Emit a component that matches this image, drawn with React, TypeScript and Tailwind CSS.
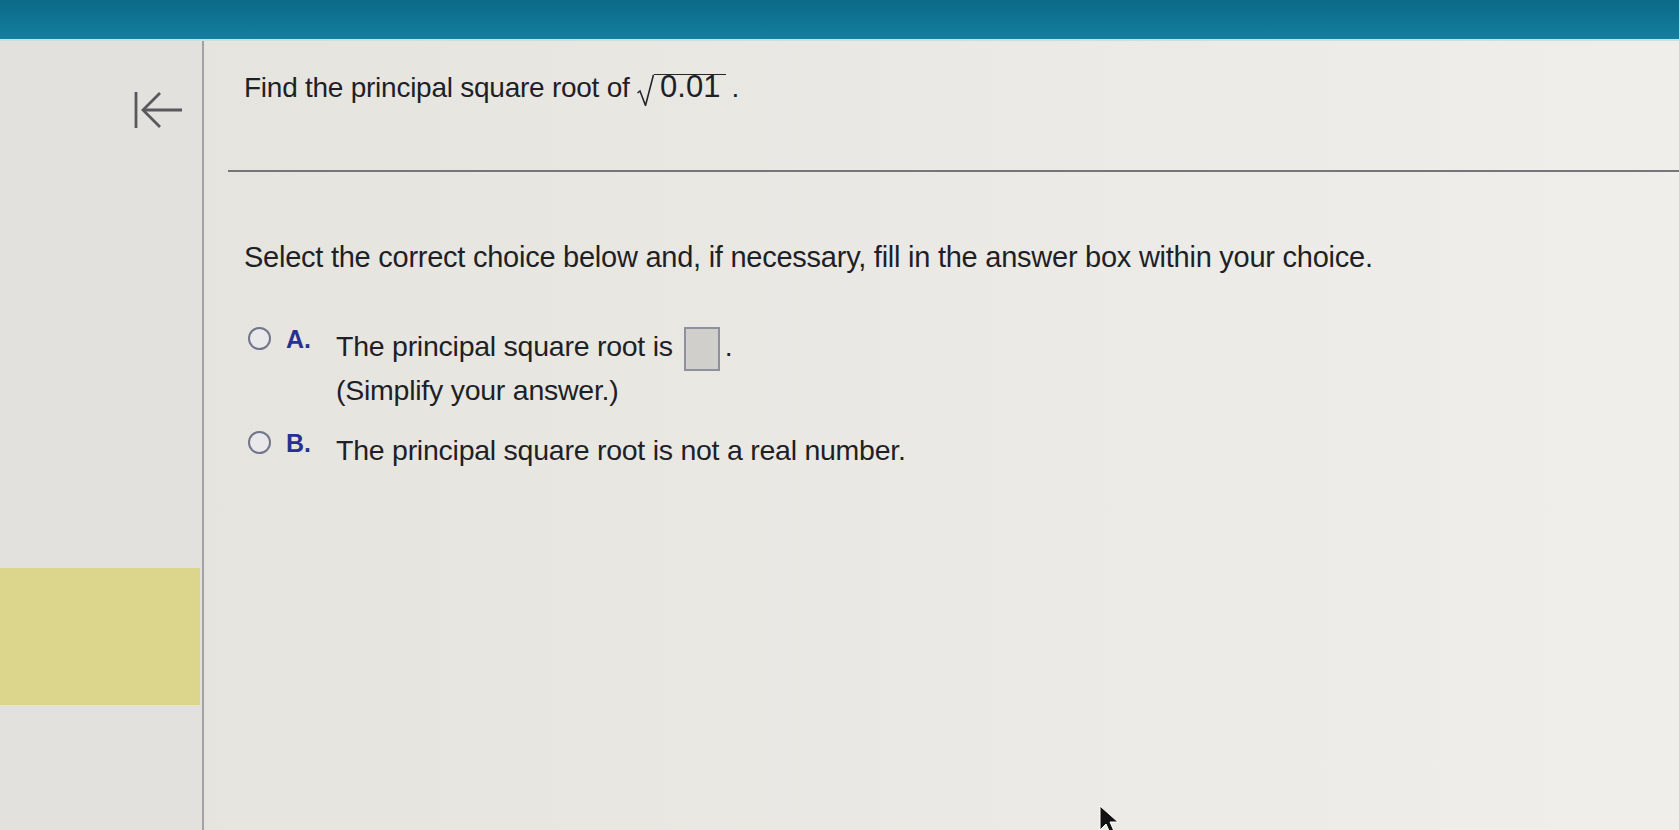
export default function App() {
  return (
    <div className="relative w-full h-[830px] overflow-hidden flex flex-col bg-[#e8e6e1] font-['Liberation_Sans',Arial,sans-serif] text-[#1f1f26]">
      <div className="h-[41px] shrink-0 bg-linear-to-b from-[#0b6a88] to-[#147f9f] border-b-2 border-[#cfdce0]" />

      <div className="flex flex-1">
        <aside className="w-[204px] shrink-0 bg-[#e2e1de] border-r-2 border-[#a2a2a6] flex flex-col">
          <button className="ml-[130px] mt-[49px] w-[56px] h-[40px]">
            <svg viewBox="0 0 56 40" className="w-[56px] h-[40px]" fill="none" stroke="#58585d" strokeWidth="2.8">
              <path d="M6 2v36" />
              <path d="M30 3 13 20 30 37" />
              <path d="M13 20h39" />
            </svg>
          </button>
          <div className="mt-[438px] h-[137px] mr-[2px] bg-[#dbd68c]" />
        </aside>

        <main className="flex-1 bg-linear-to-r from-[#e6e4df] to-[#efeeea]">
          <div className="ml-[24px] pl-[16px] pt-[31px] pb-[66px] border-b-2 border-[#76767a]">
            <div className="h-[32px] leading-[32px] text-[28px] tracking-[-0.25px] whitespace-nowrap">
              Find the principal square root of{' '}
              <svg viewBox="0 0 17 32" className="inline-block w-[17px] h-[32px] align-[-8.5px]" fill="none" stroke="#25252b" strokeWidth="1.6">
                <path d="M0.5 19 3 17 8.5 31.5 16.5 0.8" />
              </svg>
              <span className="inline-block border-t-[1.6px] border-[#25252b] text-[31px] leading-[24px] pl-[6px] pr-[6px] tracking-normal">0.01</span>
              <span className="ml-[5px]">.</span>
            </div>
          </div>

          <div className="pl-[40px] mt-[69px] h-[32px] leading-[32px] text-[29px] tracking-[-0.25px] whitespace-nowrap">
            Select the correct choice below and, if necessary, fill in the answer box within your choice.
          </div>

          <div className="pl-[44px] mt-[51px] flex items-start">
            <span className="mt-[3px] w-[23px] h-[23px] rounded-full border-2 border-[#72768a] bg-[#e9e9ec]" />
            <span className="ml-[15px] mt-[2px] w-[50px] text-[25px] leading-[26px] font-bold text-[#29318f]">A.</span>
            <div className="text-[28.5px] tracking-[-0.25px] leading-[44px] whitespace-nowrap">
              <div className="h-[44px]">
                The principal square root is
                <span className="inline-block ml-[11px] w-[36px] h-[44px] -my-[9px] align-[-5.5px] border-2 border-[#8e909b] bg-[#d1cfcb]" />
                <span className="ml-[5px]">.</span>
              </div>
              <div className="h-[44px]">(Simplify your answer.)</div>
            </div>
          </div>

          <div className="pl-[44px] mt-[16px] flex items-start">
            <span className="mt-[3px] w-[23px] h-[23px] rounded-full border-2 border-[#72768a] bg-[#e9e9ec]" />
            <span className="ml-[15px] mt-[2px] w-[50px] text-[25px] leading-[26px] font-bold text-[#29318f]">B.</span>
            <div className="text-[28.5px] tracking-[-0.25px] leading-[44px] whitespace-nowrap">
              The principal square root is not a real number.
            </div>
          </div>
        </main>
      </div>

      <svg viewBox="0 0 20 30" className="absolute left-[1099px] top-[805px] w-[20px] h-[30px]">
        <path d="M1 1v24l6-6 4 9 4-2-4-9h8z" fill="#111" stroke="#fff" strokeWidth="1" />
      </svg>
    </div>
  )
}
